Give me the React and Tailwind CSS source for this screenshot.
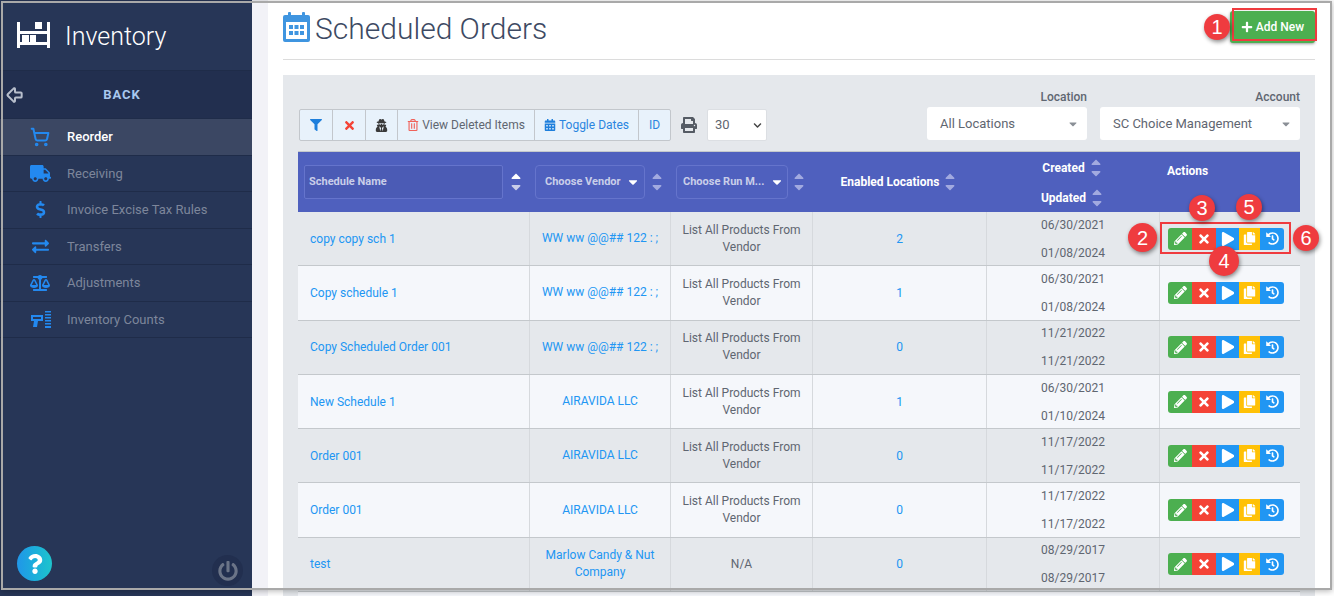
import React from 'react';
import {
    FaFilter, FaTimes, FaUserSecret, FaRegTrashAlt, FaCalendarAlt, FaPrint, FaPencilAlt, FaPlay, FaCopy,
    FaHistory, FaPlus, FaTruck, FaDollarSign, FaExchangeAlt, FaBalanceScale, FaQuestion, FaPowerOff, FaSortUp, FaSortDown,
    FaCaretDown, FaChevronDown,
} from 'react-icons/fa';
import { ShoppingCart, ArrowBigLeft } from 'lucide-react';

const ShelfIcon = () => (
    <svg width="33" height="26" viewBox="0 0 33 26" fill="white">
        <rect x="0" y="0" width="3" height="26" />
        <rect x="30" y="0" width="3" height="26" />
        <rect x="3" y="9" width="27" height="3" />
        <rect x="3" y="20" width="27" height="3" />
        <rect x="18" y="0" width="7" height="7" />
        <rect x="5" y="13" width="7" height="7" />
        <rect x="13" y="13" width="6" height="7" />
    </svg>
);

const ScannerIcon = () => (
    <svg width="21" height="17" viewBox="0 0 21 17" fill="#2389f0">
        <path d="M1 4h12v6H8l-1 6H3l1-6H1z M3 6v2h8V6z" fillRule="evenodd" />
        <rect x="15" y="0" width="6" height="1.5" />
        <rect x="15" y="3" width="6" height="1.5" />
        <rect x="15" y="6" width="6" height="1.5" />
        <rect x="15" y="9" width="6" height="1.5" />
        <rect x="15" y="12" width="6" height="1.5" />
        <rect x="15" y="15" width="6" height="2" />
    </svg>
);

const CalendarIcon = () => (
    <svg width="27" height="30" viewBox="0 0 27 30" fill="#3f95e0">
        <rect x="5" y="0" width="3" height="6" rx="1" />
        <rect x="19" y="0" width="3" height="6" rx="1" />
        <path
            fillRule="evenodd"
            d="M2 3h23a2 2 0 0 1 2 2v23a2 2 0 0 1-2 2H2a2 2 0 0 1-2-2V5a2 2 0 0 1 2-2z M3 10v17h21V10z"
        />
        <rect x="6" y="13" width="4" height="4" />
        <rect x="11.5" y="13" width="4" height="4" />
        <rect x="17" y="13" width="4" height="4" />
        <rect x="6" y="19" width="4" height="4" />
        <rect x="11.5" y="19" width="4" height="4" />
        <rect x="17" y="19" width="4" height="4" />
    </svg>
);

const navItems = [
    { label: 'Reorder', icon: <ShoppingCart size={20} strokeWidth={2.4} color="#2389f0" />, active: true },
    { label: 'Receiving', icon: <FaTruck size={21} color="#2389f0" /> },
    { label: 'Invoice Excise Tax Rules', icon: <FaDollarSign size={17} color="#2389f0" /> },
    { label: 'Transfers', icon: <FaExchangeAlt size={17} color="#2389f0" /> },
    { label: 'Adjustments', icon: <FaBalanceScale size={20} color="#2389f0" /> },
    { label: 'Inventory Counts', icon: <ScannerIcon /> },
];

const rows = [
    ['copy copy sch 1', 'WW ww @@## 122 : ;', 'List All Products From Vendor', '2', '06/30/2021', '01/08/2024'],
    ['Copy schedule 1', 'WW ww @@## 122 : ;', 'List All Products From Vendor', '1', '06/30/2021', '01/08/2024'],
    ['Copy Scheduled Order 001', 'WW ww @@## 122 : ;', 'List All Products From Vendor', '0', '11/21/2022', '11/21/2022'],
    ['New Schedule 1', 'AIRAVIDA LLC', 'List All Products From Vendor', '1', '06/30/2021', '01/10/2024'],
    ['Order 001', 'AIRAVIDA LLC', 'List All Products From Vendor', '0', '11/17/2022', '11/17/2022'],
    ['Order 001', 'AIRAVIDA LLC', 'List All Products From Vendor', '0', '11/17/2022', '11/17/2022'],
    ['test', 'Marlow Candy & Nut Company', 'N/A', '0', '08/29/2017', '08/29/2017'],
];

const badges = [
    { n: 1, cls: 'left-[1204px] top-[14px] w-[26px] h-[26px]' },
    { n: 2, cls: 'left-[1128px] top-[223px] w-[29px] h-[29px]' },
    { n: 3, cls: 'left-[1189px] top-[195px] w-[26px] h-[26px]' },
    { n: 4, cls: 'left-[1209px] top-[246px] w-[30px] h-[30px]' },
    { n: 5, cls: 'left-[1236px] top-[194px] w-[26px] h-[26px]' },
    { n: 6, cls: 'left-[1293px] top-[225px] w-[26px] h-[26px]' },
];

const Sort = ({ light }) => (
    <span className={`flex flex-col items-center leading-none ${light ? 'text-white' : 'text-[#a2aae0]'}`}>
        <FaSortUp size={16} className="-mb-[12px]" />
        <FaSortDown size={16} className={light ? 'text-[#c9cee9]' : 'text-[#a2aae0]'} />
    </span>
);

const ToolButton = ({ className, children }) => (
    <div className={`h-full flex items-center justify-center gap-[3px] border-r border-[#c3c7cc] last:border-r-0 ${className}`}>
        {children}
    </div>
);

const Actions = () => (
    <div className="flex h-[22px] w-[116px] rounded-[3px] overflow-hidden text-white">
        <div className="w-[24px] bg-[#4caf50] flex items-center justify-center"><FaPencilAlt size={13} /></div>
        <div className="w-[24px] bg-[#f44336] flex items-center justify-center"><FaTimes size={14} /></div>
        <div className="w-[23px] bg-[#2196f3] flex items-center justify-center"><FaPlay size={14} /></div>
        <div className="w-[21px] bg-[#ffc107] flex items-center justify-center"><FaCopy size={13} /></div>
        <div className="w-[24px] bg-[#2196f3] flex items-center justify-center"><FaHistory size={13} /></div>
    </div>
);

const App = () => {
    return (
        <div className="relative w-[1334px] h-[596px] overflow-hidden flex bg-white font-['Roboto',sans-serif] text-[12px] text-[#5f6671]">
            <aside className="w-[252px] flex-none bg-[#273657] flex flex-col relative">
                <div className="h-[71px] flex-none flex items-center pl-[17px] gap-[15px] border-b border-[#1f2c49]">
                    <ShelfIcon />
                    <span className="text-[25px] font-light text-white pt-[3px]">Inventory</span>
                </div>
                <div className="h-[48px] flex-none flex items-center bg-[#222f4f] border-b border-[#1f2c49] relative">
                    <ArrowBigLeft size={20} color="#b8bfcc" strokeWidth={2.4} className="absolute left-[5px]" />
                    <span className="w-full text-center pr-[8px] text-[13px] font-bold tracking-[1px] text-[#a9c8ee]">BACK</span>
                </div>
                {navItems.map((item) => (
                    <div
                        key={item.label}
                        className={`h-[36.5px] flex-none flex items-center border-b border-[#1f2c49] ${
                            item.active ? 'bg-[#3b4763] text-white font-medium' : 'text-[#7d869b]'
                        }`}
                    >
                        <span className="w-[67px] flex-none flex justify-center pl-[15px] pr-[2px]">{item.icon}</span>
                        <span className="text-[13px]">{item.label}</span>
                    </div>
                ))}
                <div className="mt-auto mb-[10px] flex items-end justify-between pl-[17px] pr-[9px]">
                    <div className="w-[35px] h-[35px] mb-[5px] rounded-full bg-gradient-to-r from-[#2196e8] to-[#1fc4cc] flex items-center justify-center">
                        <FaQuestion size={20} color="white" />
                    </div>
                    <div className="w-[31px] h-[31px] rounded-full bg-[#222f4f] flex items-center justify-center">
                        <FaPowerOff size={20} color="#6b7487" />
                    </div>
                </div>
            </aside>

            <div className="w-[16px] flex-none bg-[#f2f2f7]" />

            <main className="flex-1 min-w-0 pl-[15px] pr-[19px]">
                <header className="h-[60px] flex items-start justify-between border-b border-[#dcdcdc] pt-[11px]">
                    <div className="flex items-start gap-[5px] mt-[1px]">
                        <CalendarIcon />
                        <h1 className="text-[30px] leading-[34px] font-light text-[#3d4a63]">Scheduled Orders</h1>
                    </div>
                    <button className="h-[32px] w-[85px] rounded-[3px] bg-[#4caf50] text-white font-medium flex items-center justify-center gap-[3px] shadow-[0_1px_3px_rgba(0,0,0,0.4)]">
                        <FaPlus size={12} />
                        Add New
                    </button>
                </header>

                <section className="mt-[15px] bg-[#e5e8ec] px-[15px] pt-[20px]">
                    <div className="h-[56px] flex items-end justify-between pb-[10px] pl-[1px]">
                        <div className="flex items-center">
                            <div className="flex h-[32px] border border-[#c3c7cc] bg-[#e8f2fb] rounded-[2px]">
                                <ToolButton className="w-[33px]"><FaFilter size={12} color="#1e7fdc" /></ToolButton>
                                <ToolButton className="w-[33px]"><FaTimes size={13} color="#f44336" /></ToolButton>
                                <ToolButton className="w-[32px]"><FaUserSecret size={13} color="#3a3a3a" /></ToolButton>
                                <ToolButton className="w-[137px] text-[#5f6671]">
                                    <FaRegTrashAlt size={12} color="#f0625a" />
                                    View Deleted Items
                                </ToolButton>
                                <ToolButton className="w-[104px] text-[#2b85e0]">
                                    <FaCalendarAlt size={12} color="#1e7fdc" />
                                    Toggle Dates
                                </ToolButton>
                                <ToolButton className="w-[31px] text-[#2b85e0]">ID</ToolButton>
                            </div>
                            <FaPrint size={16} color="#555b64" className="ml-[10px]" />
                            <div className="ml-[10px] w-[60px] h-[32px] bg-white border border-[#dcdfe3] rounded-[2px] flex items-center justify-between pl-[7px] pr-[4px] text-[13px]">
                                30
                                <FaChevronDown size={9} color="#444" />
                            </div>
                        </div>
                        <div className="flex gap-[13px] mb-[1px]">
                            <div className="w-[160px]">
                                <div className="text-right font-medium text-[#5f6671] leading-[14px] mb-[3px]">Location</div>
                                <div className="h-[33px] bg-white rounded-[3px] flex items-center justify-between pl-[13px] pr-[8px] text-[13px]">
                                    All Locations
                                    <FaCaretDown size={12} color="#8a8f96" />
                                </div>
                            </div>
                            <div className="w-[200px]">
                                <div className="text-right font-medium text-[#5f6671] leading-[14px] mb-[3px]">Account</div>
                                <div className="h-[33px] bg-white rounded-[3px] flex items-center justify-between pl-[13px] pr-[8px] text-[13px]">
                                    SC Choice Management
                                    <FaCaretDown size={12} color="#8a8f96" />
                                </div>
                            </div>
                        </div>
                    </div>

                    <div className="w-[1002px] border-t border-[#c4c8cc]">
                        <div className="h-[60px] bg-[#4f60be] flex items-center text-[#c9cee9] font-bold text-[11px]">
                            <div className="w-[232px] flex-none flex items-center pl-[6px] gap-[5px]">
                                <div className="w-[199px] h-[34px] bg-[#4b5bb5] border border-[#6574cc] rounded-[2px] flex items-center pl-[4px]">Schedule Name</div>
                                <Sort light />
                            </div>
                            <div className="w-[141px] flex-none flex items-center pl-[5px] gap-[4px]">
                                <div className="w-[110px] h-[34px] border border-[#6574cc] rounded-[4px] flex items-center justify-between pl-[9px] pr-[4px]">
                                    Choose Vendor
                                    <FaCaretDown size={14} color="white" />
                                </div>
                                <Sort />
                            </div>
                            <div className="w-[142px] flex-none flex items-center pl-[5px] gap-[3px]">
                                <div className="w-[112px] h-[34px] border border-[#6574cc] rounded-[4px] flex items-center justify-between pl-[6px] pr-[3px]">
                                    <span className="whitespace-nowrap">Choose Run M...</span>
                                    <FaCaretDown size={14} color="white" />
                                </div>
                                <Sort />
                            </div>
                            <div className="w-[174px] flex-none flex items-center justify-center gap-[3px] text-white text-[12px] pr-[1px]">
                                Enabled Locations <Sort />
                            </div>
                            <div className="w-[173px] flex-none flex flex-col items-center gap-[10px] text-white text-[12px] pr-[1px] pt-[2px]">
                                <span className="flex items-center gap-[3px] leading-[19px]">Created <Sort /></span>
                                <span className="flex items-center gap-[3px] leading-[19px]">Updated <Sort /></span>
                            </div>
                            <div className="flex-1 pl-[7px] text-white text-[12px] -mt-[22px]">Actions</div>
                        </div>

                        {rows.map((row, i) => (
                            <div
                                key={i}
                                className={`h-[54.3px] flex items-stretch border-b border-[#c4c8cc] ${i % 2 ? 'bg-[#f5f7fb]' : 'bg-[#e5e8ec]'}`}
                            >
                                <div className="w-[232px] flex-none flex items-center pl-[12px] text-[#2196f3] border-r border-[#d6d9dd]">{row[0]}</div>
                                <div className="w-[141px] flex-none flex items-center justify-center text-center leading-[17px] px-[8px] text-[#2196f3] border-r border-[#d6d9dd]">{row[1]}</div>
                                <div className="w-[142px] flex-none flex items-center justify-center text-center leading-[17px] px-[8px] border-r border-[#d6d9dd]">{row[2]}</div>
                                <div className="w-[174px] flex-none flex items-center justify-center text-[#2196f3] border-r border-[#d6d9dd]">{row[3]}</div>
                                <div className="w-[173px] flex-none flex flex-col items-center justify-center leading-[28px] border-r border-[#d6d9dd]">
                                    <span>{row[4]}</span>
                                    <span>{row[5]}</span>
                                </div>
                                <div className="flex-1 flex items-center pl-[8px]"><Actions /></div>
                            </div>
                        ))}
                        <div className="h-[20px] bg-[#f5f7fb]" />
                    </div>
                </section>
            </main>

            {/* annotations on top of the screenshot */}
            <div className="absolute left-[1232px] top-[8px] w-[85px] h-[33px] border-2 border-[#ef3b3f] pointer-events-none" />
            <div className="absolute left-[1160px] top-[222px] w-[131px] h-[32px] border-2 border-[#ef3b3f] pointer-events-none" />
            {badges.map((b) => (
                <div
                    key={b.n}
                    className={`absolute rounded-full bg-[#ef3b3f] text-white flex items-center justify-center font-['Liberation_Sans',sans-serif] text-[20px] shadow-[1px_2px_4px_rgba(0,0,0,0.45)] ${b.cls}`}
                >
                    {b.n}
                </div>
            ))}
            <div className="absolute left-[1px] top-[1px] w-[1331px] h-[589px] border-2 border-[#a9a9a9] shadow-[0_1px_6px_rgba(0,0,0,0.3)] pointer-events-none" />
        </div>
    );
};

export default App;
